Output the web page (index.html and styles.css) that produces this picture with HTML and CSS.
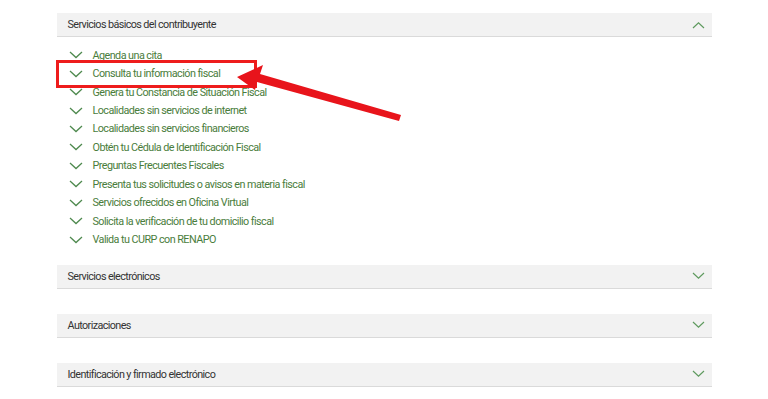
FILE: index.html
```html
<!DOCTYPE html>
<html>
<head>
    <title>Servicios</title>
    <meta name="viewport" content="width=device-width, initial-scale=1.0">
    <link rel="stylesheet" href="styles.css">
</head>
<body>
    <div class="container">
        <div class="panel open">
            <div class="panel-head">
                <span>Servicios básicos del contribuyente</span>
                <svg class="head-icon" width="13" height="8" viewBox="0 0 13 8"><polyline points="1,7 6.5,1.8 12,7" fill="none" stroke="#5e9a5e" stroke-width="1.2"/></svg>
            </div>
            <ul class="links">
                <li><svg class="chev" width="14" height="8" viewBox="0 0 14 8"><polyline points="1,1 7,6.5 13,1" fill="none" stroke="#4f8a4f" stroke-width="1.3"/></svg>Agenda una cita</li>
                <li><svg class="chev" width="14" height="8" viewBox="0 0 14 8"><polyline points="1,1 7,6.5 13,1" fill="none" stroke="#4f8a4f" stroke-width="1.3"/></svg>Consulta tu información fiscal</li>
                <li><svg class="chev" width="14" height="8" viewBox="0 0 14 8"><polyline points="1,1 7,6.5 13,1" fill="none" stroke="#4f8a4f" stroke-width="1.3"/></svg>Genera tu Constancia de Situación Fiscal</li>
                <li><svg class="chev" width="14" height="8" viewBox="0 0 14 8"><polyline points="1,1 7,6.5 13,1" fill="none" stroke="#4f8a4f" stroke-width="1.3"/></svg>Localidades sin servicios de internet</li>
                <li><svg class="chev" width="14" height="8" viewBox="0 0 14 8"><polyline points="1,1 7,6.5 13,1" fill="none" stroke="#4f8a4f" stroke-width="1.3"/></svg>Localidades sin servicios financieros</li>
                <li><svg class="chev" width="14" height="8" viewBox="0 0 14 8"><polyline points="1,1 7,6.5 13,1" fill="none" stroke="#4f8a4f" stroke-width="1.3"/></svg>Obtén tu Cédula de Identificación Fiscal</li>
                <li><svg class="chev" width="14" height="8" viewBox="0 0 14 8"><polyline points="1,1 7,6.5 13,1" fill="none" stroke="#4f8a4f" stroke-width="1.3"/></svg>Preguntas Frecuentes Fiscales</li>
                <li><svg class="chev" width="14" height="8" viewBox="0 0 14 8"><polyline points="1,1 7,6.5 13,1" fill="none" stroke="#4f8a4f" stroke-width="1.3"/></svg>Presenta tus solicitudes o avisos en materia fiscal</li>
                <li><svg class="chev" width="14" height="8" viewBox="0 0 14 8"><polyline points="1,1 7,6.5 13,1" fill="none" stroke="#4f8a4f" stroke-width="1.3"/></svg>Servicios ofrecidos en Oficina Virtual</li>
                <li><svg class="chev" width="14" height="8" viewBox="0 0 14 8"><polyline points="1,1 7,6.5 13,1" fill="none" stroke="#4f8a4f" stroke-width="1.3"/></svg>Solicita la verificación de tu domicilio fiscal</li>
                <li><svg class="chev" width="14" height="8" viewBox="0 0 14 8"><polyline points="1,1 7,6.5 13,1" fill="none" stroke="#4f8a4f" stroke-width="1.3"/></svg>Valida tu CURP con RENAPO</li>
            </ul>
            <div class="highlight"></div>
            <svg class="arrow" width="180" height="70" viewBox="0 0 180 70">
                <polygon points="0,12 26,0 23,9 164,50 162,56 20,17 18,25" fill="#e8141b"/>
            </svg>
        </div>
        <div class="panel">
            <div class="panel-head">
                <span>Servicios electrónicos</span>
                <svg class="head-icon" width="13" height="8" viewBox="0 0 13 8"><polyline points="1,1 6.5,6.2 12,1" fill="none" stroke="#5e9a5e" stroke-width="1.2"/></svg>
            </div>
        </div>
        <div class="panel">
            <div class="panel-head">
                <span>Autorizaciones</span>
                <svg class="head-icon" width="13" height="8" viewBox="0 0 13 8"><polyline points="1,1 6.5,6.2 12,1" fill="none" stroke="#5e9a5e" stroke-width="1.2"/></svg>
            </div>
        </div>
        <div class="panel">
            <div class="panel-head">
                <span>Identificación y firmado electrónico</span>
                <svg class="head-icon" width="13" height="8" viewBox="0 0 13 8"><polyline points="1,1 6.5,6.2 12,1" fill="none" stroke="#5e9a5e" stroke-width="1.2"/></svg>
            </div>
        </div>
    </div>
</body>
</html>
```

FILE: styles.css
```css
body {
    background-color: white;
    margin: 0;
    font-family: Roboto, "Liberation Sans", sans-serif;
    overflow: hidden;
}

.container {
    width: 655px;
    margin: 13px auto 0;
}

.panel {
    position: relative;
    margin-bottom: 25px;
}

.panel.open {
    margin-bottom: 16px;
}

.panel-head {
    display: flex;
    justify-content: space-between;
    align-items: center;
    height: 23px;
    padding: 0 7px 0 11px;
    background-color: #f2f2f2;
    border-bottom: 1px solid #dadada;
    font-size: 10.8px;
    letter-spacing: -0.6px;
    color: #333;
}

.head-icon {
    display: block;
}

.links {
    list-style: none;
    margin: 0;
    padding: 9px 0 0 12px;
}

.links li {
    display: flex;
    align-items: center;
    height: 18.45px;
    font-size: 10.8px;
    letter-spacing: -0.55px;
    color: #4a7d3c;
}

.chev {
    margin-right: 10px;
}

.highlight {
    position: absolute;
    left: -1px;
    top: 47px;
    width: 195px;
    height: 22px;
    border: 3px solid #ee1c1c;
}

.arrow {
    position: absolute;
    left: 180px;
    top: 52px;
}
```
